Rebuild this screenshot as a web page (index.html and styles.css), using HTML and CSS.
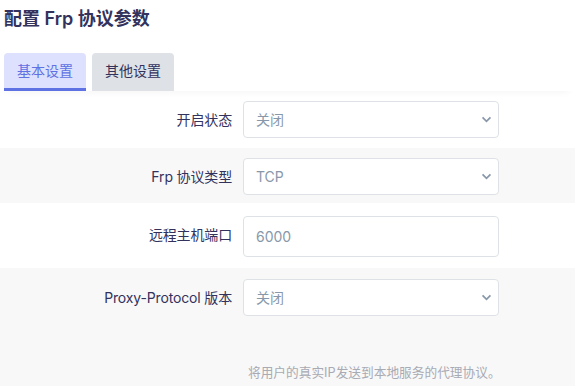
FILE: index.html
```html
<!DOCTYPE html>
<html lang="zh-CN">
<head>
    <meta charset="UTF-8">
    <meta name="viewport" content="width=device-width, initial-scale=1.0">
    <title>配置 Frp 协议参数</title>
    <link rel="stylesheet" href="styles.css">
</head>
<body>

    <h2 class="section-title">配置 Frp 协议参数</h2>

    <ul class="tabs">
        <li class="tab active">基本设置</li>
        <li class="tab">其他设置</li>
    </ul>

    <div class="section">
        <div class="value-row">
            <label class="value-title" for="enable">开启状态</label>
            <div class="value-field">
                <select id="enable" class="field">
                    <option>关闭</option>
                </select>
            </div>
        </div>

        <div class="value-row alt">
            <label class="value-title" for="proto">Frp 协议类型</label>
            <div class="value-field">
                <select id="proto" class="field">
                    <option>TCP</option>
                </select>
            </div>
        </div>

        <div class="value-row tall">
            <label class="value-title" for="port">远程主机端口</label>
            <div class="value-field">
                <input id="port" class="field text" type="text" placeholder="6000">
            </div>
        </div>

        <div class="value-row alt last">
            <label class="value-title" for="pp">Proxy-Protocol 版本</label>
            <div class="value-field">
                <select id="pp" class="field">
                    <option>关闭</option>
                </select>
                <div class="value-desc">将用户的真实IP发送到本地服务的代理协议。</div>
            </div>
        </div>
    </div>

</body>
</html>
```

FILE: styles.css
```css
body {
    margin: 0;
    font-family: Inter, "Noto Sans CJK SC", sans-serif;
    color: #32325d;
    background-color: #ffffff;
    overflow: hidden;
}
.section-title {
    margin: 0;
    padding: 7px 4px 0;
    height: 46px;
    box-sizing: border-box;
    font-size: 18px;
    font-weight: 600;
    line-height: 24px;
    color: #32325d;
}
.tabs {
    display: flex;
    gap: 6px;
    list-style: none;
    margin: 0;
    padding: 7px 4px 0;
    box-shadow: 0 6px 8px -6px rgba(0, 0, 0, 0.06);
}
.tab {
    padding: 0 13px;
    height: 38px;
    line-height: 36px;
    font-size: 14px;
    border-radius: 4px 4px 0 0;
    background-color: #dee2e6;
    color: #32325d;
    box-sizing: border-box;
}
.tab.active {
    background-color: #dde1fd;
    color: #5e72e4;
    border-bottom: 3px solid #5e72e4;
}
.value-row {
    display: grid;
    grid-template-columns: 232px 256px;
    column-gap: 11px;
    align-items: start;
    padding: 10px 0;
}
.value-row.alt {
    background-color: #f8f8f8;
    padding: 10px 0 8px;
}
.value-row.tall {
    padding: 13px 0 11px;
}
.value-row.last {
    padding: 11px 0 0;
    height: 118px;
    box-sizing: border-box;
}
.value-title {
    text-align: right;
    font-size: 14px;
    line-height: 37px;
    letter-spacing: -0.15px;
    color: #32325d;
}
.tall .value-title {
    line-height: 38px;
}
.field {
    display: block;
    width: 256px;
    height: 37px;
    box-sizing: border-box;
    padding: 0 12px;
    border: 1px solid #dee2e6;
    border-radius: 4px;
    background-color: #ffffff;
    font-family: Inter, "Noto Sans CJK SC", sans-serif;
    font-size: 14px;
    color: #8898aa;
    appearance: none;
    background-image: url("data:image/svg+xml,%3Csvg xmlns='http://www.w3.org/2000/svg' width='12' height='8' viewBox='0 0 12 8'%3E%3Cpath d='M1.5 1.5 6 6l4.5-4.5' fill='none' stroke='%238898aa' stroke-width='2'/%3E%3C/svg%3E");
    background-repeat: no-repeat;
    background-position: right 6px center;
    background-size: 11px 7px;
}
.field.text {
    height: 41px;
    background-image: none;
}
.field.text::placeholder {
    color: #8898aa;
}
.value-desc {
    margin-top: 46px;
    padding-left: 5px;
    font-size: 12.7px;
    color: #a8aab4;
    white-space: nowrap;
}
```
